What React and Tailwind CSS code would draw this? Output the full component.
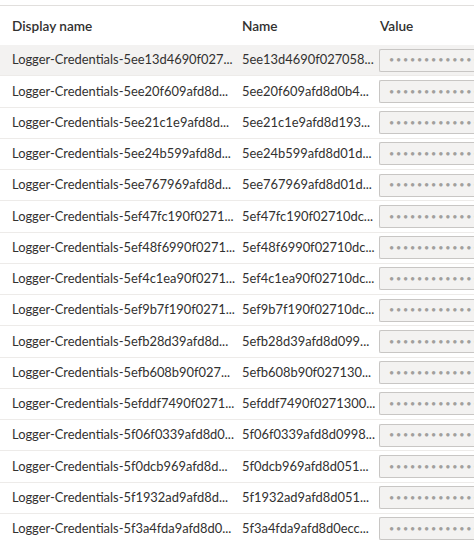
const rows = [
  ['Logger-Credentials-5ee13d4690f027...', '5ee13d4690f027058...'],
  ['Logger-Credentials-5ee20f609afd8d...', '5ee20f609afd8d0b4...'],
  ['Logger-Credentials-5ee21c1e9afd8d...', '5ee21c1e9afd8d193...'],
  ['Logger-Credentials-5ee24b599afd8d...', '5ee24b599afd8d01d...'],
  ['Logger-Credentials-5ee767969afd8d...', '5ee767969afd8d01d...'],
  ['Logger-Credentials-5ef47fc190f0271...', '5ef47fc190f02710dc...'],
  ['Logger-Credentials-5ef48f6990f0271...', '5ef48f6990f02710dc...'],
  ['Logger-Credentials-5ef4c1ea90f0271...', '5ef4c1ea90f02710dc...'],
  ['Logger-Credentials-5ef9b7f190f0271...', '5ef9b7f190f02710dc...'],
  ['Logger-Credentials-5efb28d39afd8d...', '5efb28d39afd8d099...'],
  ['Logger-Credentials-5efb608b90f027...', '5efb608b90f027130...'],
  ['Logger-Credentials-5efddf7490f0271...', '5efddf7490f0271300...'],
  ['Logger-Credentials-5f06f0339afd8d0...', '5f06f0339afd8d0998...'],
  ['Logger-Credentials-5f0dcb969afd8d...', '5f0dcb969afd8d051...'],
  ['Logger-Credentials-5f1932ad9afd8d...', '5f1932ad9afd8d051...'],
  ['Logger-Credentials-5f3a4fda9afd8d0...', '5f3a4fda9afd8d0ecc...'],
];

export default function App() {
  return (
    <div className="h-[542px] w-[474px] overflow-hidden bg-white pt-[5px] text-[#323130] text-[12.9px] font-['Lato',sans-serif]">
      <div className="border-t border-[#e1dfdd]">
        <div className="flex h-[39px] items-center pt-[2px] text-[13.6px] font-semibold">
          <div className="w-[242px] shrink-0 pl-3">Display name</div>
          <div className="w-[138px] shrink-0">Name</div>
          <div className="flex-1">Value</div>
        </div>

        {rows.map(([display, name], i) => (
          <div
            key={name}
            className={`flex h-[31.25px] items-center whitespace-nowrap border-b border-[#edebe9] ${
              i === 0 ? 'bg-[#f3f2f1]' : 'bg-white'
            }`}
          >
            <div className="w-[242px] shrink-0 pl-3">{display}</div>
            <div className="w-[138px] shrink-0">{name}</div>
            <div className="min-w-0 flex-1">
              <div className="ml-[-1px] flex h-[23px] w-[95px] items-center rounded-l-[2px] border border-r-0 border-[#c8c6c4] bg-[#f3f2f1] pl-[9px] text-[9px] tracking-[1.8px] text-[#a19f9d]">
                •••••••••••••••
              </div>
            </div>
          </div>
        ))}
      </div>
    </div>
  );
}
